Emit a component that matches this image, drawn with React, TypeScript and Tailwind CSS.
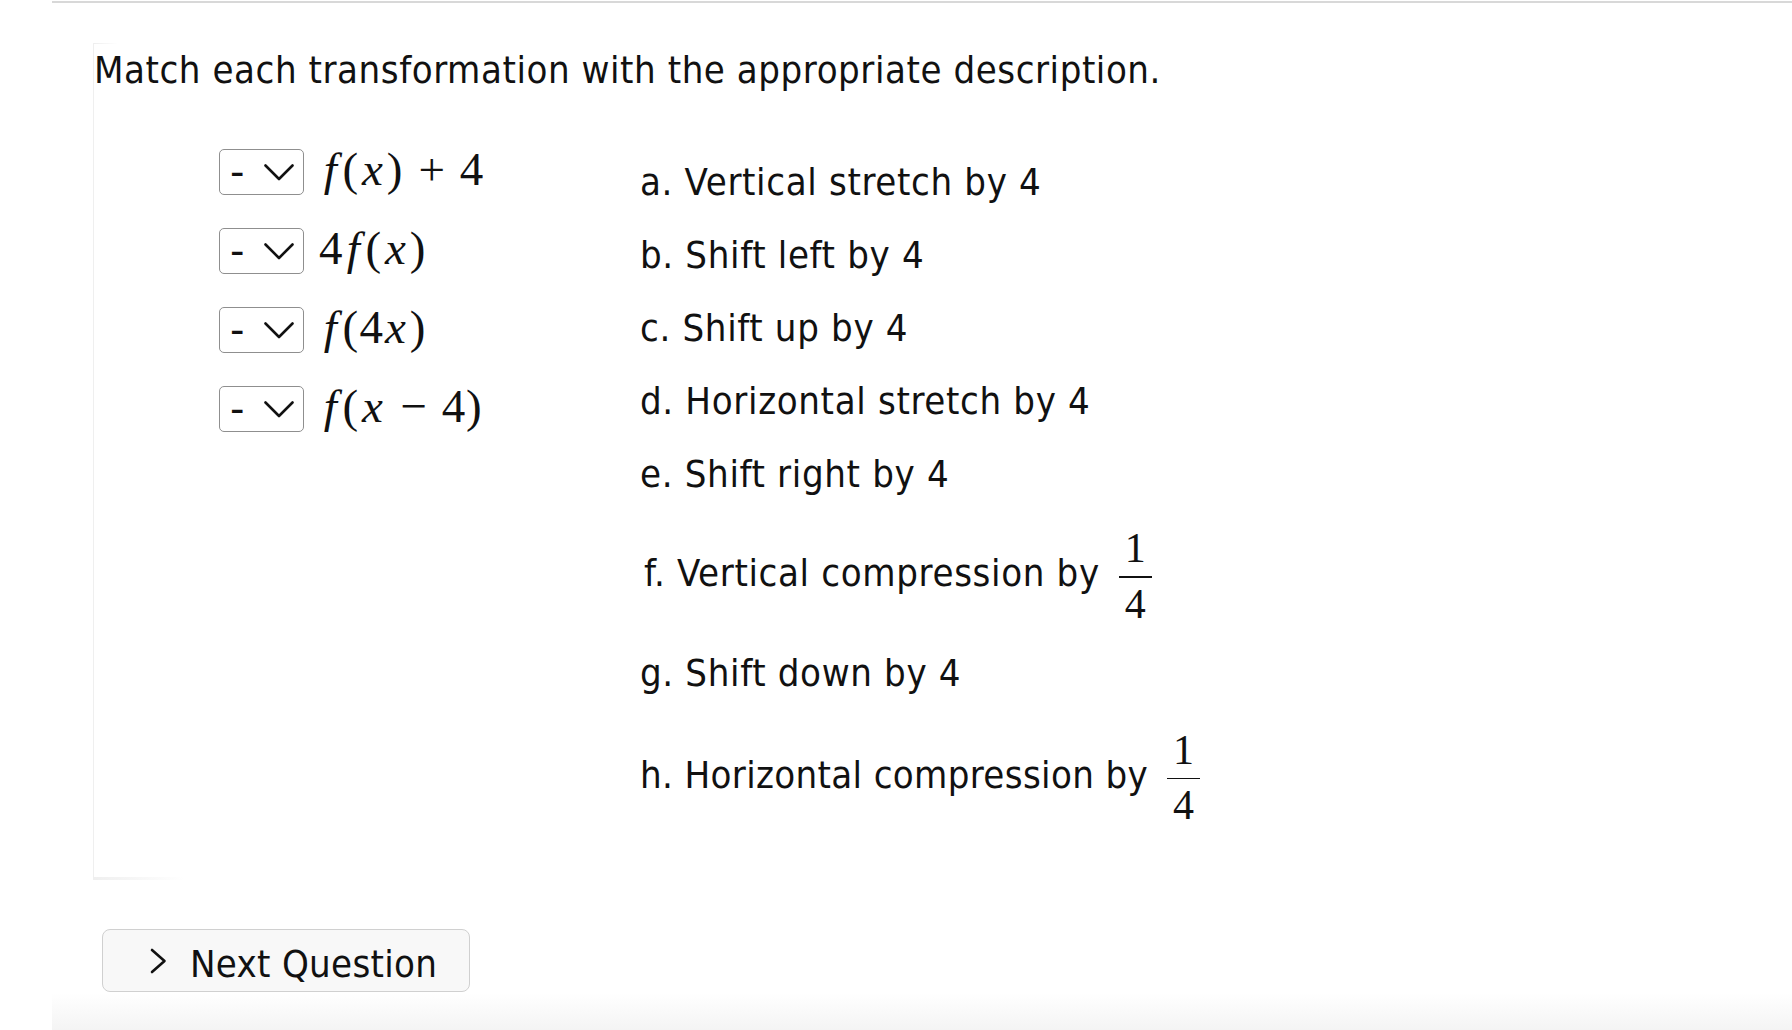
import React from "react";

const sans = "font-['DejaVu_Sans_Condensed','DejaVu_Sans',sans-serif]";
const serif = "font-['Liberation_Serif','Times_New_Roman',serif]";

// advance widths taken from the TeX glyphs at 46px
const glyphBox: Record<string, string> = {
  f: "w-[22.5px] italic",
  x: "w-[26.3px] italic",
  "(": "w-[17.9px]",
  ")": "w-[17.9px]",
  "4": "w-[23px]",
  "+": "w-[35.8px]",
  "\u2212": "w-[35.8px]",
  " ": "w-[10.2px]",
};

function MathExpr({ expr }: { expr: string }) {
  return (
    <span className={`${serif} flex text-[47px] leading-none mb-[6px] whitespace-pre text-[#111]`}>
      {expr.split("").map((ch, i) => (
        <span key={i} className={`inline-block text-center ${glyphBox[ch]}`}>
          {ch}
        </span>
      ))}
    </span>
  );
}

function FakeSelect() {
  return (
    <div className="flex items-center w-[85px] h-[46px] border-[1.5px] border-[#8f8f8f] rounded-[5px] bg-white pl-[10px] pr-[9px]">
      <span className="font-['DejaVu_Sans',sans-serif] text-[40px] leading-none text-[#111]">-</span>
      <svg className="ml-auto" width="30" height="17" viewBox="0 0 30 17" fill="none">
        <path d="M1.5 1.5 L15 15 L28.5 1.5" stroke="#111" strokeWidth="2.6" strokeLinecap="round" strokeLinejoin="round" />
      </svg>
    </div>
  );
}

function Quarter() {
  return (
    <span className={`${serif} ml-[17px] mt-[6px] flex flex-col items-center text-[42px] text-[#111] tracking-normal`}>
      <span className="h-[30px] leading-[30px] px-[8px]">1</span>
      <span className="mt-[13px] h-[1.5px] w-[33px] bg-[#111]" />
      <span className="mt-[11px] h-[30px] leading-[30px] px-[8px]">4</span>
    </span>
  );
}

const leftRows = ["f(x) + 4", "4f(x)", "f(4x)", "f(x \u2212 4)"];

export default function App() {
  return (
    <div className={`${sans} w-[1792px] h-[1030px] bg-white overflow-hidden text-[#111]`}>
      <div className="ml-[52px] mt-px h-[1029px] border-t-2 border-[#d8d8d8] flex flex-col">
        <div className="relative ml-[41px] mt-[40px] h-[837px] border-l border-[#efefef]">
          <div className="absolute left-0 top-0 h-px w-[24px] bg-linear-to-r from-[#eeeeee] to-white" />
          <div className="absolute left-0 bottom-0 h-[3px] w-[90px] bg-linear-to-r from-[#efefef] to-white" />

          <h1 className="pt-[5px] text-[38px] leading-[44px] font-normal tracking-[0.55px]">
            Match each transformation with the appropriate description.
          </h1>

          <div className="flex items-start">
            <div className="ml-[125px] mt-[57px] w-[421px] flex flex-col gap-[33px]">
              {leftRows.map((r) => (
                <div key={r} className="flex items-center h-[46px]">
                  <FakeSelect />
                  <div className="ml-[15px]">
                    <MathExpr expr={r} />
                  </div>
                </div>
              ))}
            </div>

            <div className="mt-[54px] text-[38px] tracking-[0.65px]">
              <div className="h-[73px] leading-[73px]">a. Vertical stretch by 4</div>
              <div className="h-[73px] leading-[73px]">b. Shift left by 4</div>
              <div className="h-[73px] leading-[73px]">c. Shift up by 4</div>
              <div className="h-[73px] leading-[73px]">d. Horizontal stretch by 4</div>
              <div className="h-[73px] leading-[73px]">e. Shift right by 4</div>
              <div className="h-[124px] flex items-center">
                <span className="leading-none ml-[4px]">f. Vertical compression by</span>
                <Quarter />
              </div>
              <div className="h-[76px] leading-[76px]">g. Shift down by 4</div>
              <div className="h-[127px] flex items-center">
                <span className="leading-none tracking-[0.35px]">h. Horizontal compression by</span>
                <Quarter />
              </div>
            </div>
          </div>
        </div>

        <button className="ml-[50px] mt-[49px] w-[368px] h-[63px] flex items-center border-[1.5px] border-[#d0d0d0] rounded-[8px] bg-[#f8f8f8] text-[#111]">
          <svg className="ml-[47px]" width="17" height="26" viewBox="0 0 17 26" fill="none">
            <path d="M2 2 L14.5 13 L2 24" stroke="#111" strokeWidth="2.6" strokeLinecap="round" strokeLinejoin="round" />
          </svg>
          <span className="ml-[23px] mt-[7px] text-[38px] leading-none tracking-[0.3px]">Next Question</span>
        </button>

        <div className="mt-auto h-[37px] bg-linear-to-b from-white to-[#f4f4f4]" />
      </div>
    </div>
  );
}
